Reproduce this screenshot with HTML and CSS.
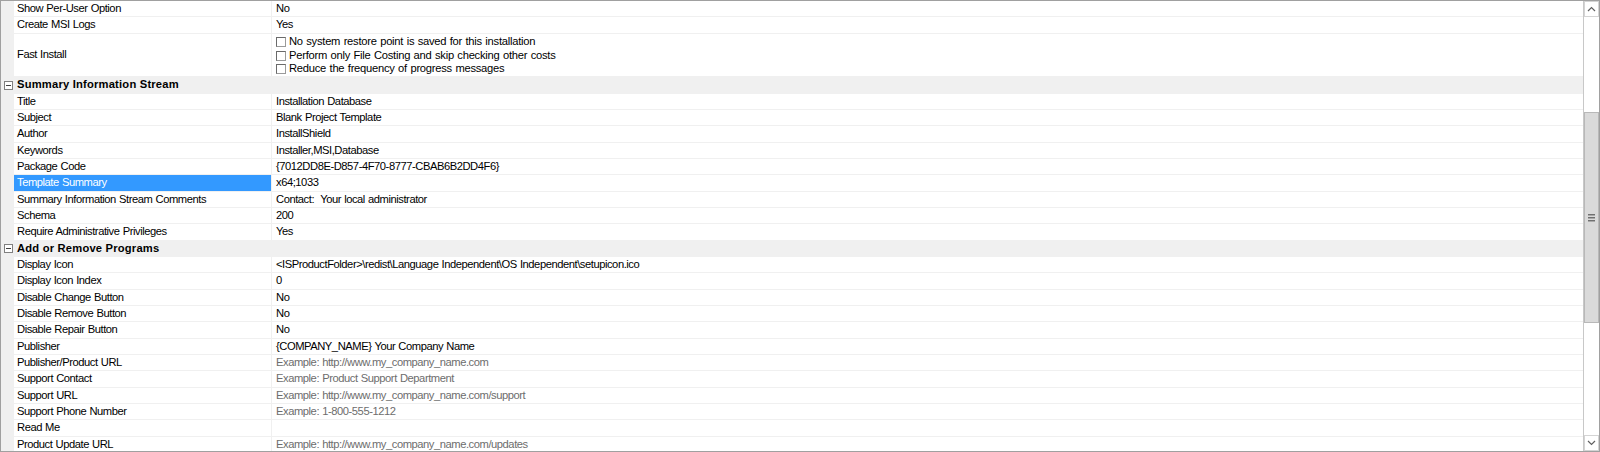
FILE: index.html
```html
<!DOCTYPE html>
<html>
<head>
<meta charset="utf-8">
<link rel="stylesheet" href="styles.css">
</head>
<body>
<div class="frame">
  <div class="rows">
    <div class="row"><div class="gutter"></div><div class="label">Show Per-User Option</div><div class="value">No</div></div>
    <div class="row"><div class="gutter"></div><div class="label">Create MSI Logs</div><div class="value">Yes</div></div>
    <div class="row tall"><div class="gutter"></div><div class="label">Fast Install</div>
      <div class="value checks">
        <div class="check"><span class="box"></span>No system restore point is saved for this installation</div>
        <div class="check"><span class="box"></span>Perform only File Costing and skip checking other costs</div>
        <div class="check"><span class="box"></span>Reduce the frequency of progress messages</div>
      </div>
    </div>
    <div class="row header"><div class="gutter"><span class="toggle"></span></div><div class="htitle">Summary Information Stream</div></div>
    <div class="row"><div class="gutter"></div><div class="label">Title</div><div class="value">Installation Database</div></div>
    <div class="row"><div class="gutter"></div><div class="label">Subject</div><div class="value">Blank Project Template</div></div>
    <div class="row"><div class="gutter"></div><div class="label">Author</div><div class="value">InstallShield</div></div>
    <div class="row"><div class="gutter"></div><div class="label">Keywords</div><div class="value">Installer,MSI,Database</div></div>
    <div class="row"><div class="gutter"></div><div class="label">Package Code</div><div class="value">{7012DD8E-D857-4F70-8777-CBAB6B2DD4F6}</div></div>
    <div class="row"><div class="gutter"></div><div class="label selected">Template Summary</div><div class="value">x64;1033</div></div>
    <div class="row"><div class="gutter"></div><div class="label">Summary Information Stream Comments</div><div class="value">Contact:&nbsp; Your local administrator</div></div>
    <div class="row"><div class="gutter"></div><div class="label">Schema</div><div class="value">200</div></div>
    <div class="row"><div class="gutter"></div><div class="label">Require Administrative Privileges</div><div class="value">Yes</div></div>
    <div class="row header"><div class="gutter"><span class="toggle"></span></div><div class="htitle">Add or Remove Programs</div></div>
    <div class="row"><div class="gutter"></div><div class="label">Display Icon</div><div class="value">&lt;ISProductFolder&gt;\redist\Language Independent\OS Independent\setupicon.ico</div></div>
    <div class="row"><div class="gutter"></div><div class="label">Display Icon Index</div><div class="value">0</div></div>
    <div class="row"><div class="gutter"></div><div class="label">Disable Change Button</div><div class="value">No</div></div>
    <div class="row"><div class="gutter"></div><div class="label">Disable Remove Button</div><div class="value">No</div></div>
    <div class="row"><div class="gutter"></div><div class="label">Disable Repair Button</div><div class="value">No</div></div>
    <div class="row"><div class="gutter"></div><div class="label">Publisher</div><div class="value">{COMPANY_NAME} Your Company Name</div></div>
    <div class="row"><div class="gutter"></div><div class="label">Publisher/Product URL</div><div class="value hint">Example: http://www.my_company_name.com</div></div>
    <div class="row"><div class="gutter"></div><div class="label">Support Contact</div><div class="value hint">Example: Product Support Department</div></div>
    <div class="row"><div class="gutter"></div><div class="label">Support URL</div><div class="value hint">Example: http://www.my_company_name.com/support</div></div>
    <div class="row"><div class="gutter"></div><div class="label">Support Phone Number</div><div class="value hint">Example: 1-800-555-1212</div></div>
    <div class="row"><div class="gutter"></div><div class="label">Read Me</div><div class="value"></div></div>
    <div class="row"><div class="gutter"></div><div class="label">Product Update URL</div><div class="value hint">Example: http://www.my_company_name.com/updates</div></div>
    <div class="row"><div class="gutter"></div><div class="label"></div><div class="value"></div></div>
  </div>
  <div class="scrollbar">
    <div class="arrow">
      <svg width="9" height="6" viewBox="0 0 9 6"><path d="M1 5 L4.5 1.5 L8 5" fill="none" stroke="#606060" stroke-width="1.2"/></svg>
    </div>
    <div class="track top"></div>
    <div class="thumb"><span class="grip"></span><span class="grip"></span><span class="grip"></span></div>
    <div class="track bottom"></div>
    <div class="arrow">
      <svg width="9" height="6" viewBox="0 0 9 6"><path d="M1 1 L4.5 4.5 L8 1" fill="none" stroke="#606060" stroke-width="1.2"/></svg>
    </div>
  </div>
</div>
</body>
</html>
```
FILE: styles.css
```css
html, body {
  margin: 0;
  padding: 0;
  background: #fff;
}
body {
  font-family: "Liberation Sans", Arial, sans-serif;
  font-size: 11.2px;
  letter-spacing: -0.45px;
  word-spacing: 0.5px;
  color: #000;
}
.frame {
  width: 1600px;
  height: 452px;
  box-sizing: border-box;
  border: 1px solid #a0a0a0;
  display: flex;
  overflow: hidden;
  background: #fff;
}
.rows {
  flex: 1;
  min-width: 0;
  overflow: hidden;
}
.row {
  display: grid;
  grid-template-columns: 13px 258px 1fr;
  height: 16.33px;
  box-sizing: border-box;
  border-bottom: 1px solid #f0f0f0;
  line-height: 15.33px;
  white-space: nowrap;
}
.row.tall {
  height: 43.7px;
}
.gutter {
  background: #f0f0f0;
  display: flex;
  align-items: center;
  justify-content: center;
}
.label {
  padding-left: 3px;
  border-right: 1px solid #f0f0f0;
  overflow: hidden;
}
.row.tall .label {
  display: flex;
  align-items: center;
}
.label.selected {
  background: #3399ff;
  color: #fff;
}
.value {
  padding-left: 4px;
  overflow: hidden;
}
.value.hint {
  color: #6d6d6d;
}
.checks {
  padding-top: 1.8px;
  letter-spacing: -0.25px;
  word-spacing: 0.6px;
}
.check {
  height: 13.5px;
  line-height: 13.5px;
  display: flex;
  align-items: center;
}
.box {
  width: 10px;
  height: 10px;
  box-sizing: border-box;
  border: 1px solid #6a6a6a;
  border-right-color: #9a9a9a;
  border-bottom-color: #9a9a9a;
  background: #fff;
  margin-right: 3px;
  flex: none;
}
.row.header {
  background: #f0f0f0;
  grid-template-columns: 13px 1fr;
}
.htitle {
  padding-left: 3px;
  font-weight: bold;
  letter-spacing: 0.2px;
  word-spacing: 0;
}
.toggle {
  width: 9px;
  height: 9px;
  box-sizing: border-box;
  border: 1px solid #808080;
  background: #fff;
  position: relative;
  margin-left: 1px;
}
.toggle::after {
  content: "";
  position: absolute;
  left: 1px;
  right: 1px;
  top: 3px;
  height: 1px;
  background: #404040;
}
.scrollbar {
  width: 16px;
  flex: none;
  box-sizing: border-box;
  border-left: 1px solid #c8c8c8;
  display: flex;
  flex-direction: column;
  background: #fff;
}
.arrow {
  height: 16px;
  flex: none;
  box-sizing: border-box;
  border: 1px solid #d4d4d4;
  display: flex;
  align-items: center;
  justify-content: center;
  background: #fff;
}
.track.top {
  height: 95px;
  flex: none;
}
.thumb {
  height: 211px;
  flex: none;
  box-sizing: border-box;
  background: #dadada;
  border: 1px solid #b8b8b8;
  display: flex;
  flex-direction: column;
  align-items: center;
  justify-content: center;
  gap: 1px;
}
.grip {
  width: 7px;
  height: 2px;
  background: #707070;
  border-bottom: 1px solid #a8a8a8;
  box-sizing: border-box;
}
.track.bottom {
  flex: 1;
}
```
